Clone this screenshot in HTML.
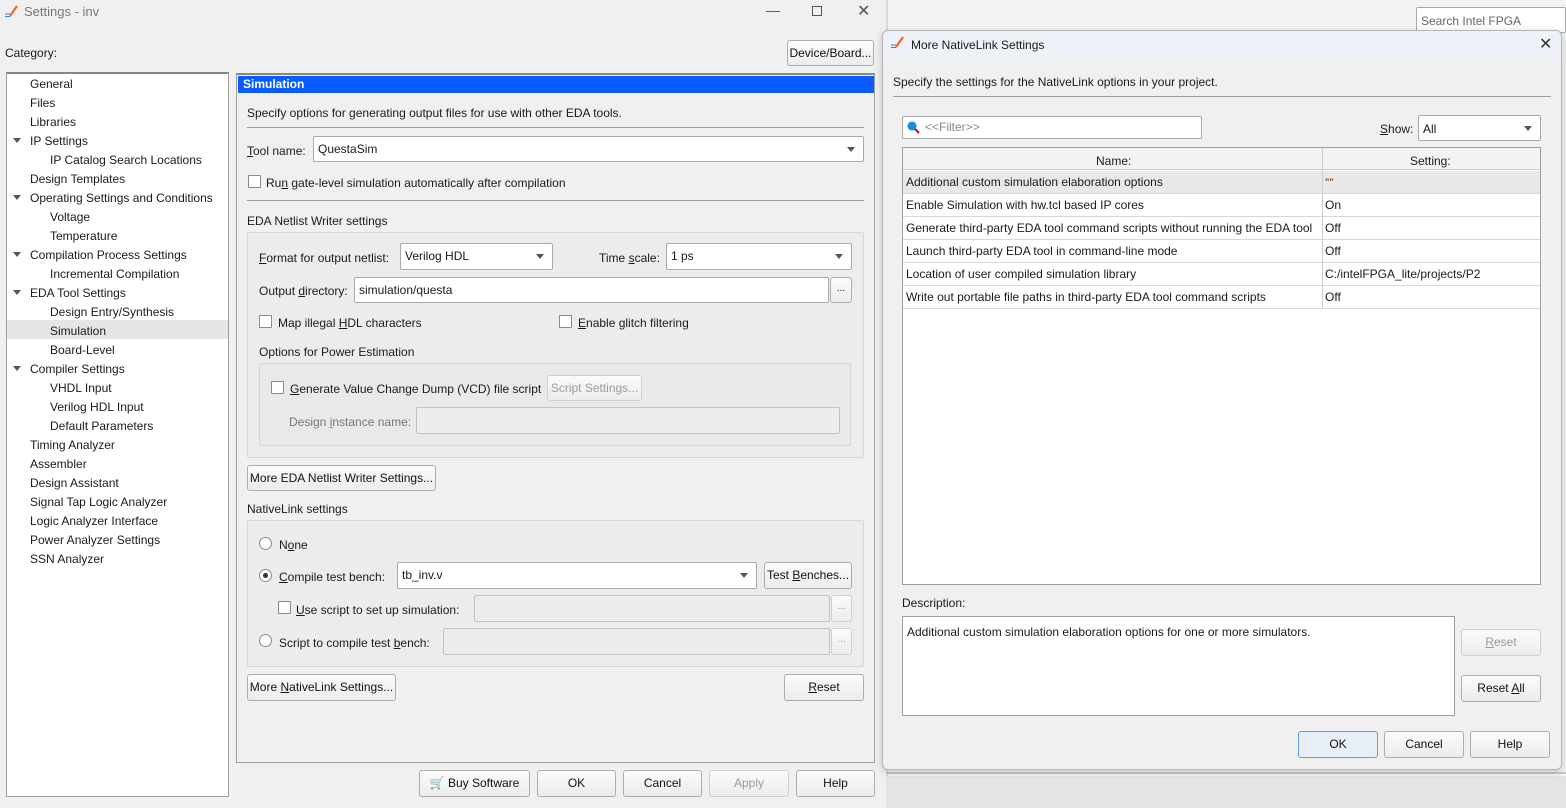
<!DOCTYPE html>
<html><head><meta charset="utf-8"><style>
*{box-sizing:border-box;margin:0;padding:0}
body{width:1566px;height:808px;overflow:hidden;background:#f0f0f0;font:12px "Liberation Sans",sans-serif;color:#1a1a1a;position:relative}
.a{position:absolute}
.btn{position:absolute;border:1px solid #adadad;border-radius:3px;background:linear-gradient(#fbfbfb,#ececec);text-align:center;line-height:24px;font-size:12px;color:#111}
.dis{color:#9a9a9a;border-color:#cfcfcf}
.inp{position:absolute;background:#fff;border:1px solid #a9a9a9;border-radius:2px;padding-left:4px;line-height:24px}
.inpd{position:absolute;background:#ececec;border:1px solid #c3c3c3;border-radius:2px}
.cb{position:absolute;width:13px;height:13px;border:1px solid #8a8a8a;background:#fff;border-radius:1px}
.rb{position:absolute;width:13px;height:13px;border:1px solid #8a8a8a;background:#fff;border-radius:50%}
.dd::after{content:"";position:absolute;right:8px;top:10px;border-left:4px solid transparent;border-right:4px solid transparent;border-top:5px solid #555}
.t{position:absolute;white-space:nowrap}
.tri{position:absolute;border-left:4px solid transparent;border-right:4px solid transparent;border-top:5px solid #555}
.grp{position:absolute;border:1px solid #d6d6d6;background:#ececec;border-radius:2px}
u{text-decoration:underline}
.row{position:absolute;left:903px;width:637px;height:23px;border-bottom:1px solid #d8d8d8;line-height:22px}
.row span{position:absolute;left:3px}
.row b{font-weight:normal;position:absolute;left:422px}
</style></head><body>
<!-- main title -->
<div class="a" style="left:0;top:0;width:886px;height:27px;background:#f0f0f0"></div>
<svg class="a" style="left:4px;top:4px" width="16" height="14"><line x1="6" y1="12" x2="13" y2="2" stroke="#f06020" stroke-width="2"/><line x1="1" y1="10" x2="6" y2="10" stroke="#1a8ae0"/><line x1="1" y1="12.5" x2="6" y2="12.5" stroke="#1a8ae0"/></svg>
<div class="t" style="left:24px;top:4px;color:#777;font-size:13px">Settings - inv</div>
<div class="t" style="left:766px;top:2px;color:#555;font-size:14px">—</div>
<div class="a" style="left:812px;top:6px;width:10px;height:10px;border:1px solid #555"></div>
<div class="t" style="left:857px;top:1px;color:#555;font-size:16px">✕</div>
<div class="t" style="left:5px;top:46px">Category:</div>
<div class="btn" style="left:787px;top:40px;width:87px;height:26px">Device/Board...</div>
<!-- tree -->
<div class="a" style="left:6px;top:72px;width:223px;height:725px;background:#fff;border:1px solid #a0a0a0;border-top:2px solid #888"></div>
<div class="a" style="left:7px;top:320px;width:221px;height:19px;background:#e6e6e6"></div>
<div id="tree"></div>
<!-- right panel -->
<div class="a" style="left:236px;top:73px;width:639px;height:690px;border:1px solid #a0a0a0;border-top:2px solid #888"></div>
<div class="a" style="left:238px;top:76px;width:636px;height:17px;background:#0a5cff;color:#fff;font-weight:bold;line-height:17px;padding-left:5px">Simulation</div>
<div class="t" style="left:247px;top:106px">Specify options for generating output files for use with other EDA tools.</div>
<div class="a" style="left:247px;top:127px;width:617px;height:1px;background:#a0a0a0"></div>
<div class="t" style="left:247px;top:144px"><u>T</u>ool name:</div>
<div class="inp dd" style="left:313px;top:136px;width:551px;height:26px">QuestaSim</div>
<div class="cb" style="left:248px;top:175px"></div>
<div class="t" style="left:266px;top:176px">Ru<u>n</u> gate-level simulation automatically after compilation</div>
<div class="a" style="left:247px;top:200px;width:617px;height:1px;background:#a0a0a0"></div>
<div class="t" style="left:247px;top:214px">EDA Netlist Writer settings</div>
<div class="grp" style="left:247px;top:232px;width:617px;height:226px"></div>
<div class="t" style="left:259px;top:251px"><u>F</u>ormat for output netlist:</div>
<div class="inp dd" style="left:400px;top:243px;width:153px;height:27px">Verilog HDL</div>
<div class="t" style="left:599px;top:251px">Time <u>s</u>cale:</div>
<div class="inp dd" style="left:666px;top:243px;width:186px;height:27px">1 ps</div>
<div class="t" style="left:259px;top:284px">Output <u>d</u>irectory:</div>
<div class="inp" style="left:354px;top:277px;width:475px;height:26px">simulation/questa</div>
<div class="btn" style="left:830px;top:277px;width:22px;height:26px;line-height:22px;font-size:10px">...</div>
<div class="cb" style="left:259px;top:315px"></div>
<div class="t" style="left:278px;top:316px">Map illegal <u>H</u>DL characters</div>
<div class="cb" style="left:559px;top:315px"></div>
<div class="t" style="left:578px;top:316px"><u>E</u>nable glitch filtering</div>
<div class="t" style="left:259px;top:345px">Options for Power Estimation</div>
<div class="grp" style="left:259px;top:363px;width:592px;height:83px;background:#e9e9e9"></div>
<div class="cb" style="left:271px;top:381px"></div>
<div class="t" style="left:290px;top:382px"><u>G</u>enerate Value Change Dump (VCD) file script</div>
<div class="btn dis" style="left:547px;top:375px;width:95px;height:26px">Script Settings...</div>
<div class="t" style="left:289px;top:415px;color:#777">Design <u>i</u>nstance name:</div>
<div class="inpd" style="left:416px;top:407px;width:424px;height:27px"></div>
<div class="btn" style="left:247px;top:465px;width:189px;height:26px">More EDA Netlist Writer Settings...</div>
<div class="t" style="left:247px;top:502px">NativeLink settings</div>
<div class="grp" style="left:247px;top:520px;width:617px;height:147px"></div>
<div class="rb" style="left:259px;top:537px"></div>
<div class="t" style="left:279px;top:538px">N<u>o</u>ne</div>
<div class="rb" style="left:259px;top:569px"></div><div class="a" style="left:263px;top:573px;width:5px;height:5px;border-radius:50%;background:#333"></div>
<div class="t" style="left:279px;top:570px"><u>C</u>ompile test bench:</div>
<div class="inp dd" style="left:397px;top:562px;width:290px;height:27px;width:360px">tb_inv.v</div>
<div class="btn" style="left:764px;top:562px;width:88px;height:27px">Test <u>B</u>enches...</div>
<div class="cb" style="left:278px;top:601px"></div>
<div class="t" style="left:296px;top:603px"><u>U</u>se script to set up simulation:</div>
<div class="inpd" style="left:474px;top:595px;width:356px;height:27px"></div>
<div class="btn dis" style="left:831px;top:595px;width:21px;height:27px;line-height:22px;font-size:10px">...</div>
<div class="rb" style="left:259px;top:634px"></div>
<div class="t" style="left:279px;top:636px">Script to compile test <u>b</u>ench:</div>
<div class="inpd" style="left:443px;top:628px;width:387px;height:27px"></div>
<div class="btn dis" style="left:831px;top:628px;width:21px;height:27px;line-height:22px;font-size:10px">...</div>
<div class="btn" style="left:247px;top:674px;width:149px;height:27px">More <u>N</u>ativeLink Settings...</div>
<div class="btn" style="left:784px;top:674px;width:80px;height:27px"><u>R</u>eset</div>
<!-- bottom -->
<div class="btn" style="left:419px;top:770px;width:111px;height:27px"><span style="color:#444">🛒</span> Buy Software</div>
<div class="btn" style="left:537px;top:770px;width:79px;height:27px">OK</div>
<div class="btn" style="left:623px;top:770px;width:79px;height:27px">Cancel</div>
<div class="btn dis" style="left:709px;top:770px;width:80px;height:27px">Apply</div>
<div class="btn" style="left:796px;top:770px;width:79px;height:27px">Help</div>
<!-- background window right -->
<div class="a" style="left:886px;top:0;width:680px;height:808px;background:#f3f3f3"></div>
<div class="a" style="left:886px;top:0;width:2px;height:808px;background:#d9d9d9"></div>
<div class="inp" style="left:1416px;top:7px;width:150px;height:26px;color:#666;line-height:26px">Search Intel FPGA</div>
<div class="a" style="left:886px;top:772px;width:680px;height:2px;background:#c8c8c8"></div>
<div class="a" style="left:886px;top:776px;width:680px;height:32px;background:#e4e4e4"></div>
<!-- dialog -->
<div class="a" style="left:882px;top:30px;width:680px;height:740px;background:#f0f0f0;border:1px solid #b5b5b5;border-radius:6px;box-shadow:0 2px 8px rgba(0,0,0,.2)"></div>
<div class="a" style="left:883px;top:31px;width:678px;height:29px;background:#eef1f8;border-radius:6px 6px 0 0"></div>
<svg class="a" style="left:890px;top:35px" width="16" height="14"><line x1="6" y1="12" x2="13" y2="2" stroke="#f06020" stroke-width="2"/><line x1="1" y1="10" x2="6" y2="10" stroke="#1a8ae0"/><line x1="1" y1="12.5" x2="6" y2="12.5" stroke="#1a8ae0"/></svg>
<div class="t" style="left:911px;top:38px">More NativeLink Settings</div>
<div class="t" style="left:1539px;top:34px;font-size:16px;color:#333">✕</div>
<div class="t" style="left:893px;top:75px">Specify the settings for the NativeLink options in your project.</div>
<div class="a" style="left:893px;top:96px;width:658px;height:1px;background:#a0a0a0"></div>
<div class="inp" style="left:902px;top:116px;width:300px;height:23px;line-height:21px;padding-left:22px;color:#888">&lt;&lt;Filter&gt;&gt;</div>
<svg class="a" style="left:906px;top:120px" width="14" height="15"><circle cx="6" cy="6" r="4.5" fill="#1a8ae0"/><line x1="9" y1="9" x2="13" y2="13" stroke="#c01010" stroke-width="2"/></svg>
<div class="t" style="left:1380px;top:122px"><u>S</u>how:</div>
<div class="inp dd" style="left:1418px;top:115px;width:123px;height:26px;line-height:26px">All</div>
<div class="a" style="left:902px;top:147px;width:639px;height:438px;background:#fff;border:1px solid #a0a0a0"></div>
<div class="a" style="left:903px;top:148px;width:637px;height:22px;background:#f3f3f3;border-bottom:1px solid #ccc"></div>
<div class="t" style="left:1096px;top:154px">Name:</div>
<div class="t" style="left:1410px;top:154px">Setting:</div>
<div class="a" style="left:903px;top:171px;width:637px;height:23px;background:#e8e8e8"></div>
<div class="a" style="left:1322px;top:148px;width:1px;height:161px;background:#ccc"></div>
<div class="row" style="top:171px"><span>Additional custom simulation elaboration options</span><b style="color:#a04000;font-weight:bold;font-size:9px">""</b></div>
<div class="row" style="top:194px"><span>Enable Simulation with hw.tcl based IP cores</span><b>On</b></div>
<div class="row" style="top:217px"><span>Generate third-party EDA tool command scripts without running the EDA tool</span><b>Off</b></div>
<div class="row" style="top:240px"><span>Launch third-party EDA tool in command-line mode</span><b>Off</b></div>
<div class="row" style="top:263px"><span>Location of user compiled simulation library</span><b>C:/intelFPGA_lite/projects/P2</b></div>
<div class="row" style="top:286px"><span>Write out portable file paths in third-party EDA tool command scripts</span><b>Off</b></div>
<div class="t" style="left:902px;top:596px">Description:</div>
<div class="a" style="left:902px;top:616px;width:553px;height:100px;background:#fff;border:1px solid #a0a0a0;padding:8px 4px">Additional custom simulation elaboration options for one or more simulators.</div>
<div class="btn dis" style="left:1461px;top:629px;width:80px;height:27px"><u>R</u>eset</div>
<div class="btn" style="left:1461px;top:675px;width:80px;height:27px">Reset <u>A</u>ll</div>
<div class="btn" style="left:1298px;top:731px;width:80px;height:27px;border-color:#5aa0e8;background:#e8eef6">OK</div>
<div class="btn" style="left:1384px;top:731px;width:80px;height:27px">Cancel</div>
<div class="btn" style="left:1470px;top:731px;width:80px;height:27px">Help</div>
<script>
var items=[["General",0],["Files",0],["Libraries",0],["IP Settings",1],["IP Catalog Search Locations",2],["Design Templates",0],["Operating Settings and Conditions",1],["Voltage",2],["Temperature",2],["Compilation Process Settings",1],["Incremental Compilation",2],["EDA Tool Settings",1],["Design Entry/Synthesis",2],["Simulation",2],["Board-Level",2],["Compiler Settings",1],["VHDL Input",2],["Verilog HDL Input",2],["Default Parameters",2],["Timing Analyzer",0],["Assembler",0],["Design Assistant",0],["Signal Tap Logic Analyzer",0],["Logic Analyzer Interface",0],["Power Analyzer Settings",0],["SSN Analyzer",0]];
var h="";items.forEach(function(it,i){var y=77+i*19;h+='<div class="t" style="left:'+(it[1]==2?50:30)+'px;top:'+y+'px">'+it[0]+'</div>';if(it[1]==1)h+='<div class="tri" style="left:13px;top:'+(y+4)+'px"></div>';});
document.getElementById("tree").innerHTML=h;
</script>
</body></html>
